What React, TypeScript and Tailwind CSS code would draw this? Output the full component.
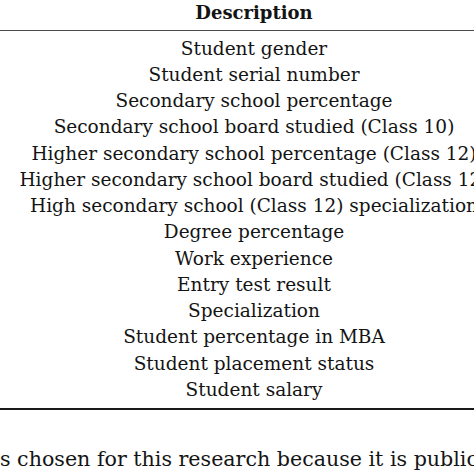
const rows = [
  "Student gender",
  "Student serial number",
  "Secondary school percentage",
  "Secondary school board studied (Class 10)",
  "Higher secondary school percentage (Class 12)",
  "Higher secondary school board studied (Class 12)",
  "High secondary school (Class 12) specialization",
  "Degree percentage",
  "Work experience",
  "Entry test result",
  "Specialization",
  "Student percentage in MBA",
  "Student placement status",
  "Student salary",
]

export default function App() {
  return (
    <div className="w-[474px] h-[474px] overflow-hidden bg-white text-[#141414] font-['DejaVu_Serif',serif]">
      <div className="w-[508px]">
        <div className="text-center font-bold text-[18px] leading-[25px] pb-[5px]">Description</div>
        <div className="border-t-[1.5px] border-b-2 border-t-[#4a4a4a] border-b-[#1a1a1a] pt-[4.5px] pb-[5px] text-center text-[18.5px] leading-[26.25px] whitespace-nowrap">
          {rows.map((r) => (
            <div key={r}>{r}</div>
          ))}
        </div>
      </div>
      <div className="mt-[35px] text-[20.6px] leading-[28px] whitespace-nowrap">
        s chosen for this research because it is public
      </div>
    </div>
  )
}
